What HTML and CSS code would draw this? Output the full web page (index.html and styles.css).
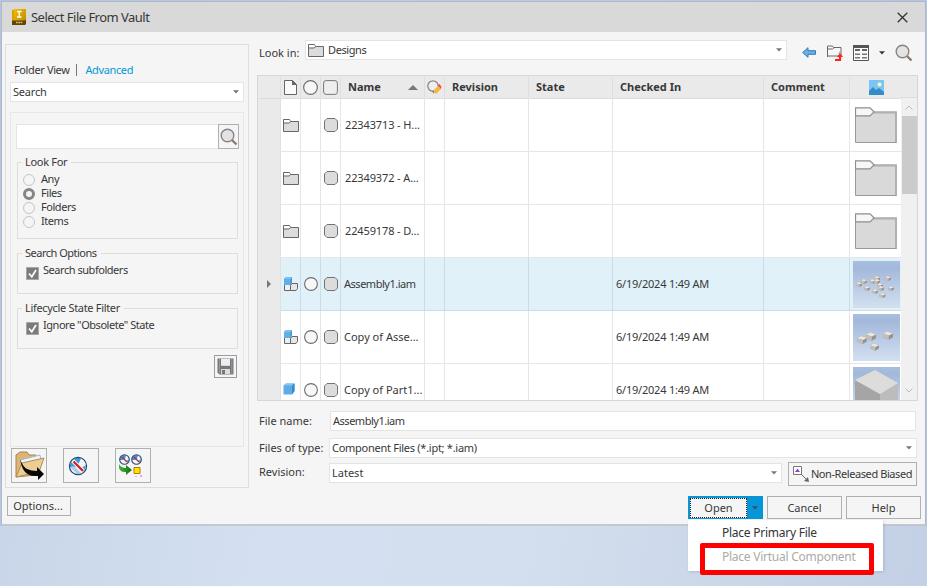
FILE: index.html
```html
<!DOCTYPE html>
<html lang="en">
<head>
<meta charset="utf-8">
<title>Select File From Vault</title>
<link rel="stylesheet" href="styles.css">
</head>
<body>
<svg class="defs" width="0" height="0">
  <defs>
    <linearGradient id="blue" x1="0" y1="0" x2="0" y2="1"><stop offset="0" stop-color="#a9bfdf"/><stop offset=".15" stop-color="#a3b8da"/><stop offset="1" stop-color="#d3e0f1"/></linearGradient>
    <linearGradient id="gold" x1="0" y1="0" x2="1" y2="1"><stop offset="0" stop-color="#f5be08"/><stop offset="1" stop-color="#b98600"/></linearGradient>
    <linearGradient id="green" x1="0" y1="0" x2="1" y2="0"><stop offset="0" stop-color="#46b33c"/><stop offset="1" stop-color="#176b17"/></linearGradient>
    <symbol id="folder" viewBox="0 0 16 13"><path d="M.5 12.5V.5h6l1 2h8v10z" fill="#dcdcdc" stroke="#666"/><path d="M1 1h5.200l1 1.700L6 3.800H1z" fill="#fff"/><path d="M.5 4h5.700l1.500-1.500" fill="none" stroke="#666"/></symbol>
    <symbol id="bigfolder" viewBox="0 0 42 36"><path d="M.5 4V35.500h41V5h-23" fill="#d9d9d9" stroke="#999"/><path d="M18 5.500h23V35" fill="none" stroke="#b0b0b0" stroke-width="2"/><path d="M.5 .8H15l4 4-4 4H.5z" fill="#f7f7f7" stroke="#8d8d8d" stroke-width="1.200"/></symbol>
    <symbol id="square" viewBox="0 0 14 14"><path d="M3 .5h8L13.500 3v8L11 13.500H3L.5 11V3z" fill="#dcdcdc" stroke="#737373"/></symbol>
    <symbol id="circle" viewBox="0 0 14 14"><circle cx="7" cy="7" r="6.400" fill="#f7f7f7" stroke="#6e6e6e" stroke-width="1.100"/></symbol>
    <symbol id="assembly" viewBox="0 0 14 14"><path d="M.5 7.500h6v6h-6z" fill="#eee" stroke="#666"/><path d="M6.500 8.500l1.500-2h5.500v5l-1.500 2H6.500z" fill="#e6e6e6" stroke="#666"/><path d="M0 2l2-2h6v6L6.500 8H0z" fill="#3d98d8"/><path d="M0 2h6.500v6H0z" fill="#62aee6"/><path d="M0 2l2-2h6L6.500 2z" fill="#7cc3f2"/></symbol>
    <symbol id="part" viewBox="0 0 12 12"><path d="M.5 2.500L3 .5h8.500v7.500L9 11.500H.5z" fill="#5eabe5"/><path d="M.5 2.500L3 .5h8.500L9 2.500z" fill="#83c4f2"/><path d="M9 2.500L11.500.5V8L9 11.500z" fill="#338ccc"/></symbol>
    <symbol id="lens" viewBox="0 0 18 18"><path d="M12 12l4.500 4.500" stroke="#8c7462" stroke-width="2.200"/><circle cx="7.500" cy="7.500" r="6.300" fill="#e3e3e3" stroke="#858585" stroke-width="1.400"/></symbol>
    <symbol id="caret" viewBox="0 0 6 4"><path d="M0 .3h6L3 3.500z" fill="currentColor"/></symbol>
    <symbol id="check" viewBox="0 0 13 13"><path d="M.5.5h12v12H.5z" fill="#7b7b7b" stroke="#a7a7a7"/><path d="M3 6.500l2.800 3.300L10 3" fill="none" stroke="#fff" stroke-width="1.700"/></symbol>
    <symbol id="no" viewBox="0 0 20 20"><circle cx="10" cy="10" r="8.600" fill="#f2f6fa"/><path d="M2 11a8 8 0 0 1 11-8.500L10 9l-2 2z" fill="#3e97d6"/><path d="M2 11l4-1 7 7-4 1z" fill="#a9cde8"/><path d="M13 12l5-3-1 5-2 2z" fill="#5aa5da"/><path d="M4.500 4.500L15.500 15.500" stroke="#fff" stroke-width="4"/><path d="M5.500 5.500L15 15" stroke="#d82020" stroke-width="2.400"/><circle cx="10" cy="10" r="8.600" fill="none" stroke="#234a73" stroke-width="1.200"/></symbol>
    <symbol id="nosmall" viewBox="0 0 11 11"><circle cx="5.500" cy="5.500" r="4.700" fill="#f2f6fa"/><path d="M1 6a4.500 4.500 0 0 1 6-4.700L6 5 4 6z" fill="#3e97d6"/><path d="M7 7l3-2-1 4z" fill="#5aa5da"/><path d="M3 3l5 5" stroke="#d82020" stroke-width="1.300"/><circle cx="5.500" cy="5.500" r="4.800" fill="none" stroke="#234a73" stroke-width="1.100"/></symbol>
    <symbol id="cube" viewBox="0 0 12 10"><path d="M0 3L5 0l7 2.500V7L7 10 0 7z" fill="#98938d"/><path d="M0 3L5 0l7 2.500L7 5z" fill="#e9e6e3"/><path d="M0 3l7 2v5L0 7z" fill="#c2beb9"/></symbol>
  </defs>
</svg>
<div class="dialog">
  <header class="titlebar">
    <svg class="logo" width="15" height="16" viewBox="0 0 15 16"><path d="M1 1l2-1h11v14l-1.500 2H1z" fill="url(#gold)"/><path d="M0 1h2v14H0z" fill="#dca000"/><path d="M0 11.500h13l1-1V15l-1 1H0z" fill="#604600"/><path d="M5 2.500h4.500M7.200 2.500v5.500M5 8h4.500" stroke="#fff" stroke-width="1.300"/><path d="M4 13.500h6.500" stroke="#d6c48a" stroke-width="1.400" stroke-dasharray="1.700 .6"/></svg>
    <span class="title">Select File From Vault</span>
    <svg class="close" width="11" height="11" viewBox="0 0 11 11"><path d="M.7.7l9.600 9.600M10.300.7L.7 10.300" stroke="#333" stroke-width="1.300"/></svg>
  </header>
  <div class="content">
    <aside class="side">
      <section class="panel">
        <nav class="tabs"><span>Folder View</span><i></i><span class="active">Advanced</span></nav>
        <div class="field mode"><span>Search</span><svg class="caret" width="6" height="4"><use href="#caret"/></svg></div>
        <div class="box">
          <div class="searchrow"><div class="field"></div><button class="find"><svg width="18" height="18"><use href="#lens"/></svg></button></div>
          <fieldset class="look"><legend>Look For</legend>
            <div class="radio"><i></i>Any</div><div class="radio on"><i></i>Files</div><div class="radio"><i></i>Folders</div><div class="radio"><i></i>Items</div>
          </fieldset>
          <fieldset class="opts"><legend>Search Options</legend><div class="check"><svg width="13" height="13"><use href="#check"/></svg><span>Search subfolders</span></div></fieldset>
          <fieldset class="life"><legend>Lifecycle State Filter</legend><div class="check"><svg width="13" height="13"><use href="#check"/></svg><span>Ignore "Obsolete" State</span></div></fieldset>
          <button class="save"><svg width="17" height="17" viewBox="0 0 17 17"><path d="M.5.5h16v16h-14l-2-2z" fill="#777"/><path d="M4 .8h9v7H4z" fill="#eee"/><path d="M4 11h9v5H4z" fill="#ddd"/><path d="M5 12h3v4H5z" fill="#777"/><path d="M2.500 1v14M14.800 1v15" stroke="#999"/></svg></button>
        </div>
        <div class="tools">
          <button><svg width="31" height="31" viewBox="0 0 31 31"><path d="M2 27V5l4-3h7l2 3h7v20z" fill="#dcb671" stroke="#a98551"/><path d="M6 10l20-5 1 5-18 8z" fill="#eef5fa" stroke="#a6b6c4"/><path d="M2 27l6-14 22-5-5 14z" fill="#edcd91" stroke="#b18c59"/><path d="M6 9q3 8 7 10t10 2v-4l7 7-6 6v-4q-11 1-15-7Q7 15 6 9z" fill="#080808"/></svg></button>
          <button class="b2"><svg width="20" height="20"><use href="#no"/></svg></button>
          <button class="b3"><svg width="25" height="26" viewBox="0 0 25 26"><use href="#nosmall" x="1" y="1" width="11" height="11"/><use href="#nosmall" x="13" y="1" width="11" height="11"/><path d="M1 11q2 4 7 4v-3l6 5-6 5v-3Q0 20 1 11z" fill="url(#green)"/><path d="M16 14.500h6v6h-6z" fill="#ffe600" stroke="#b57b00"/><path d="M18 23v1M23 22v2" stroke="#ff30ff"/></svg></button>
        </div>
      </section>
      <button class="options">Options...</button>
    </aside>
    <main class="main">
      <div class="lookin">
        <label>Look in:</label>
        <div class="field"><svg width="16" height="13"><use href="#folder"/></svg><span>Designs</span><svg class="caret" width="6" height="4"><use href="#caret"/></svg></div>
        <svg class="back" width="14" height="11" viewBox="0 0 14 11"><path d="M.7 5.500L6 .7v3h7.500v3.600H6v3z" fill="#69b1e5" stroke="#3279b3"/></svg>
        <svg class="up" width="17" height="17" viewBox="0 0 17 17"><path d="M.5 12V1h5l1 1.500h7.500V11H.5zM.5 4h5l2-1.500" fill="#f8f8f8" stroke="#686868"/><path d="M8 15h5V11" fill="none" stroke="#f22" stroke-width="2.200"/><path d="M10 12l3-4 3 4z" fill="#f22"/><path d="M11 9l2-3 2 3z" fill="#aaa"/></svg>
        <svg class="views" width="16" height="16" viewBox="0 0 16 16"><path d="M.5.5h15v15H.5z" fill="#f9f9f9" stroke="#555"/><path d="M0 0h16v3H0z" fill="#555"/><path d="M2 5h5M9 5h5" stroke="#333" stroke-width="1.500"/><path d="M2 9.200h5M9 9.200h5M2 12.800h5M9 12.800h5" stroke="#777" stroke-width="1.600"/></svg>
        <svg class="vcaret" width="6" height="4"><use href="#caret"/></svg>
        <svg class="mag" width="18" height="18"><use href="#lens"/></svg>
      </div>
      <div class="table">
        <div class="rows">
          <div class="row head">
            <div></div><div><svg width="13" height="15" viewBox="0 0 13 15"><path d="M.5.5h8l4 4v10H.5z" fill="#fafafa" stroke="#666"/><path d="M8 0l5 5H8z" fill="#666"/></svg></div>
            <div><svg width="15" height="15"><use href="#circle"/></svg></div><div><svg width="15" height="15" viewBox="0 0 15 15"><rect x=".6" y=".6" width="13.800" height="13.800" rx="2.500" fill="#eee" stroke="#777"/></svg></div>
            <div class="t name"><span>Name</span><svg width="10" height="5" viewBox="0 0 10 5"><path d="M0 5l5-5 5 5z" fill="#777"/></svg></div>
            <div><svg width="15" height="15" viewBox="0 0 15 15"><circle cx="6" cy="6" r="5.200" fill="#eee" stroke="#888" stroke-width="1.300"/><path d="M6 11l5-5 3 3-5 5z" fill="#f7b43e"/><path d="M11 5l1.500-1 2 3-1 2z" fill="#f44"/><path d="M5 11h2v3z" fill="#777"/></svg></div>
            <div class="t">Revision</div><div class="t">State</div><div class="t">Checked In</div><div class="t">Comment</div>
            <div><svg width="15" height="15" viewBox="0 0 15 15"><path d="M0 0h15v15H0z" fill="#7ac5f5"/><path d="M0 11l4-4 3 3 3-2 5 4v3H0z" fill="#348bc8"/><circle cx="10.500" cy="4.500" r="2" fill="#fff8b8"/></svg></div>
          </div>
          <div class="row"><div></div><div><svg width="16" height="13"><use href="#folder"/></svg></div><div></div><div><svg width="14" height="14"><use href="#square"/></svg></div><div class="t n">22343713 - H...</div><div></div><div></div><div></div><div></div><div></div><div><svg width="42" height="36"><use href="#bigfolder"/></svg></div></div>
          <div class="row"><div></div><div><svg width="16" height="13"><use href="#folder"/></svg></div><div></div><div><svg width="14" height="14"><use href="#square"/></svg></div><div class="t n">22349372 - A...</div><div></div><div></div><div></div><div></div><div></div><div><svg width="42" height="36"><use href="#bigfolder"/></svg></div></div>
          <div class="row"><div></div><div><svg width="16" height="13"><use href="#folder"/></svg></div><div></div><div><svg width="14" height="14"><use href="#square"/></svg></div><div class="t n">22459178 - D...</div><div></div><div></div><div></div><div></div><div></div><div><svg width="42" height="36"><use href="#bigfolder"/></svg></div></div>
          <div class="row selected"><div><svg width="4" height="8" viewBox="0 0 4 8"><path d="M0 0l4 4-4 4z" fill="#777"/></svg></div><div><svg width="14" height="14"><use href="#assembly"/></svg></div><div><svg width="14" height="14"><use href="#circle"/></svg></div><div><svg width="14" height="14"><use href="#square"/></svg></div><div class="t asm">Assembly1.iam</div><div></div><div></div><div></div><div class="t date">6/19/2024 1:49 AM</div><div></div>
            <div><svg width="47" height="47" viewBox="0 0 47 47"><path d="M0 0h47v47H0z" fill="url(#blue)"/><g><use href="#cube" x="3" y="21" width="6" height="5"/><use href="#cube" x="8" y="18" width="6" height="5"/><use href="#cube" x="11" y="25" width="6" height="5"/><use href="#cube" x="16" y="18" width="7" height="5"/><use href="#cube" x="21" y="15" width="6" height="5"/><use href="#cube" x="32" y="15" width="6" height="5"/><use href="#cube" x="24" y="22" width="6" height="5"/><use href="#cube" x="19" y="28" width="6" height="5"/><use href="#cube" x="25" y="25" width="6" height="5"/><use href="#cube" x="35" y="25" width="6" height="5"/><use href="#cube" x="26" y="32" width="7" height="5"/><use href="#cube" x="21" y="18" width="6" height="5"/></g></svg></div></div>
          <div class="row"><div></div><div><svg width="14" height="14"><use href="#assembly"/></svg></div><div><svg width="14" height="14"><use href="#circle"/></svg></div><div><svg width="14" height="14"><use href="#square"/></svg></div><div class="t">Copy of Asse...</div><div></div><div></div><div></div><div class="t date">6/19/2024 1:49 AM</div><div></div>
            <div><svg width="47" height="47" viewBox="0 0 47 47"><path d="M0 0h47v47H0z" fill="url(#blue)"/><use href="#cube" x="4" y="22" width="10" height="8"/><use href="#cube" x="13" y="18" width="10" height="9"/><use href="#cube" x="30" y="17" width="10" height="9"/><use href="#cube" x="17" y="29" width="9" height="8"/></svg></div></div>
          <div class="row"><div></div><div class="pt"><svg width="12" height="12"><use href="#part"/></svg></div><div><svg width="14" height="14"><use href="#circle"/></svg></div><div><svg width="14" height="14"><use href="#square"/></svg></div><div class="t">Copy of Part1...</div><div></div><div></div><div></div><div class="t date">6/19/2024 1:49 AM</div><div></div>
            <div><svg width="47" height="47" viewBox="0 0 47 47"><path d="M0 0h47v47H0z" fill="url(#blue)"/><path d="M2 13l25 14v20L2 33z" fill="#a5a5a5"/><path d="M45 16L27 27v20l18-13z" fill="#bcbcbc"/><path d="M2 13L22 3l23 13-18 11z" fill="#dcdcdb"/></svg></div></div>
        </div>
        <div class="scroll"><div class="top"></div><svg width="8" height="5" viewBox="0 0 8 5"><path d="M.5 4.500L4 1l3.500 3.500" fill="none" stroke="#bbb"/></svg><div class="thumb"></div><svg class="down" width="8" height="5" viewBox="0 0 8 5"><path d="M.5.5L4 4 7.500.5" fill="none" stroke="#bbb"/></svg></div>
      </div>
      <div class="form">
        <label>File name:</label><div class="field fname"><span class="asm">Assembly1.iam</span></div>
        <label>Files of type:</label><div class="field ftype"><span>Component Files (*.ipt; *.iam)</span><svg class="caret" width="6" height="4"><use href="#caret"/></svg></div>
        <label>Revision:</label><div class="rev"><div class="field"><span>Latest</span><svg class="caret" width="6" height="4"><use href="#caret"/></svg></div>
        <button><svg width="17" height="17" viewBox="0 0 17 17"><path d="M.5.5h8v8h-8z" fill="#fff" stroke="#777"/><path d="M2 6h5L4.500 2.500z" fill="#8445d2"/><path d="M8 8l6 6" stroke="#666"/><path d="M16 16l-5-1 4-4z" fill="#666"/></svg><span>Non-Released Biased</span></button></div>
      </div>
      <div class="actions">
        <div class="open"><button><span>Open</span></button><svg width="6" height="4"><use href="#caret"/></svg>
          <div class="menu"><div>Place Primary File</div><div class="off">Place Virtual Component</div><i class="mark"></i></div>
        </div>
        <button>Cancel</button><button>Help</button>
      </div>
    </main>
  </div>
</div>
</body>
</html>
```
FILE: styles.css
```css
* { box-sizing: border-box; }
body { margin: 0; width: 927px; height: 586px; overflow: hidden; padding: 1px 1px 0; background: linear-gradient(100deg, #c5d2e5 0%, #d4e0f2 35%, #d3dfee 60%, #c3d0e5 100%); font: 11px/14px "Noto Sans", sans-serif; color: #383838; }
svg { display: block; flex: none; }
.defs { position: absolute; }
button { font: inherit; color: inherit; background: #f5f5f5; border: 1px solid #b0b0b0; padding: 0; display: flex; align-items: center; justify-content: center; white-space: nowrap; }
.dialog { width: 925px; height: 524px; background: #f5f5f5; border: 1px solid #c6c6c6; border-color: #aab9cf #aab9cf #c8c8c8; box-shadow: 0 0 0 1px #a8b7ce80; }
.titlebar { height: 30px; background: #d9d9d9; display: flex; align-items: center; padding: 0 17px 0 10px; }
.title { font-size: 13px; margin-left: 4px; letter-spacing: -.52px; }
.close { margin-left: auto; }
.content { display: flex; }
.side { width: 247px; padding: 12px 0 0 3px; }
.panel { width: 244px; height: 444px; border: 1px solid #dedede; padding: 18px 4px 0; }
.tabs { display: flex; align-items: center; height: 14px; padding-left: 4px; letter-spacing: -.38px; }
.tabs i { width: 1px; height: 12px; background: #777; margin: 0 8px 0 7px; }
.active { color: #0696d7; }
.field { height: 20px; background: #fff; border: 1px solid #e4e4e4; display: flex; align-items: center; padding-left: 2px; white-space: nowrap; }
.caret { margin-left: auto; margin-right: 4px; color: #777; }
.mode { margin-top: 5px; width: 234px; letter-spacing: -.2px; }
.box { height: 335px; margin-top: 10px; width: 234px; border: 1px solid #e7e7e7; padding: 11px 5px 0 6px; }
.searchrow { display: flex; margin: 0 -1px; }
.searchrow .field { height: 25px; flex: 1; }
.find { width: 21px; height: 25px; margin-left: -1px; }
fieldset { margin: 0; border: 1px solid #dedede; min-width: 0; padding: 0 5px; }
legend { padding: 0 4px 0 3px; margin-left: -1px; line-height: 14px; }
.opts legend { letter-spacing: -.5px; }
.life legend { letter-spacing: -.32px; }
.look { height: 84px; margin-top: 6px; padding-top: 3px; }
.look legend { letter-spacing: -.3px; }
.radio { height: 14px; line-height: 14px; display: flex; align-items: center; gap: 6px; letter-spacing: -.45px; }
.radio i { width: 12px; height: 12px; border: 1px solid #c5c5c5; border-radius: 50%; position: relative; top: 1px; }
.radio.on i { border: 3.500px solid #858585; }
.opts { height: 48px; margin-top: 7px; }
.life { height: 48px; margin-top: 7px; }
.check { display: flex; gap: 4px; padding: 3px 0 0 3px; letter-spacing: -.46px; }
.check svg { margin-top: 4px; }
.save { width: 23px; height: 23px; margin: 6px 1px 0 auto; border-color: #959da6; }
.tools { display: flex; gap: 16px; padding: 1px 0 0 1px; }
.tools button { width: 36px; height: 35px; }
.b2 { padding-right: 6px; }
.b3 { padding-right: 6px; }
.options { width: 64px; height: 20px; margin: 8px 0 0 2px; padding-right: 2px; }
.main { width: 673px; padding-left: 7px; }
.lookin { height: 43px; display: flex; padding-left: 3px; }
.lookin label { margin-top: 14px; width: 46px; }
.lookin .field { width: 482px; margin-top: 8px; letter-spacing: -.4px; }
.lookin .field span { margin-left: 4px; }
.back { margin: 15px 0 0 15px; }
.up { margin: 13px 0 0 11px; }
.views { margin: 13px 0 0 9px; }
.vcaret { margin: 19px 0 0 10px; }
.mag { margin: 12px 0 0 10px; }
.table { width: 661px; height: 326px; margin-left: 1px; border: 1px solid #d7d7d7; display: flex; overflow: hidden; }
.rows { width: 643px; }
.row { display: grid; grid-template-columns: 23px 20px 20px 20px 84px 20px 84px 84px 151px 86px 51px; height: 53px; background: #fff; }
.row > div { border-right: 1px solid #e6e6e6; border-bottom: 1px solid #e6e6e6; display: flex; align-items: center; justify-content: center; overflow: hidden; }
.row > div:first-child { background: #eaeaea; border-bottom-color: #eaeaea; border-right-color: #e0e0e0; }
.row > div:last-child { border-right: 0; padding-left: 1px; }
.row > .t { justify-content: flex-start; padding-left: 3px; white-space: nowrap; }
.row > .n { letter-spacing: -.12px; padding-left: 4px; }
.asm { letter-spacing: -.48px; }
.row > .date { letter-spacing: -.22px; }
.row.head { height: 23px; background: #eaeaea; font-weight: bold; border-bottom: 1px solid #dcdcdc; }
.row.head > div { border-color: #dedede; border-bottom: 0; margin: 1px 0; }
.row.head > .t { padding-left: 7px; }
.head .name svg { margin-left: auto; margin-right: 6px; }
.row.selected { background: #e1f1fa; }
.row.selected > div:not(:first-child) { border-color: #cbdce6; }
.pt { padding: 0 3px 2px 0; }
.scroll { width: 16px; background: #f0f0f0; display: flex; flex-direction: column; align-items: center; }
.scroll .top { width: 16px; height: 22px; background: #eaeaea; border-bottom: 1px solid #dcdcdc; margin-bottom: 7px; flex: none; }
.thumb { width: 15px; height: 78px; background: #cbcbcb; margin-top: 6px; }
.down { margin: auto 0 7px; }
.form { display: grid; grid-template-columns: 70px 588px; margin: 10px 0 0 3px; }
.form label { line-height: 20px; white-space: nowrap; }
.fname { width: 586px; margin: 0 0 7px 1px; }
.ftype { margin-bottom: 4px; letter-spacing: -.27px; }
.rev { display: flex; gap: 6px; }
.rev .field { width: 453px; margin-top: 1px; }
.rev button { width: 129px; height: 24px; gap: 1px; letter-spacing: -.42px; }
.actions { display: flex; gap: 4px; margin: 10px 0 0 432px; }
.actions > button { width: 75px; height: 23px; }
.open { width: 75px; height: 23px; background: #0696d7; position: relative; display: flex; align-items: center; padding-left: 2px; color: #29516b; }
.open button { width: 57px; height: 20px; border: 1px dotted #222; color: #383838; }
.open > svg { margin-left: 5px; }
.menu { position: absolute; left: 0; top: 24px; width: 195px; height: 51px; background: #fff; box-shadow: 1px 1px 3px #0002; color: #333; padding: 1px 0 0 34px; font-size: 12px; line-height: 24px; white-space: nowrap; letter-spacing: -.25px; }
.off { color: #aaa; }
.mark { position: absolute; left: 12px; top: 23px; width: 174px; height: 32px; border: 5px solid #f00; border-radius: 2px; }
```
